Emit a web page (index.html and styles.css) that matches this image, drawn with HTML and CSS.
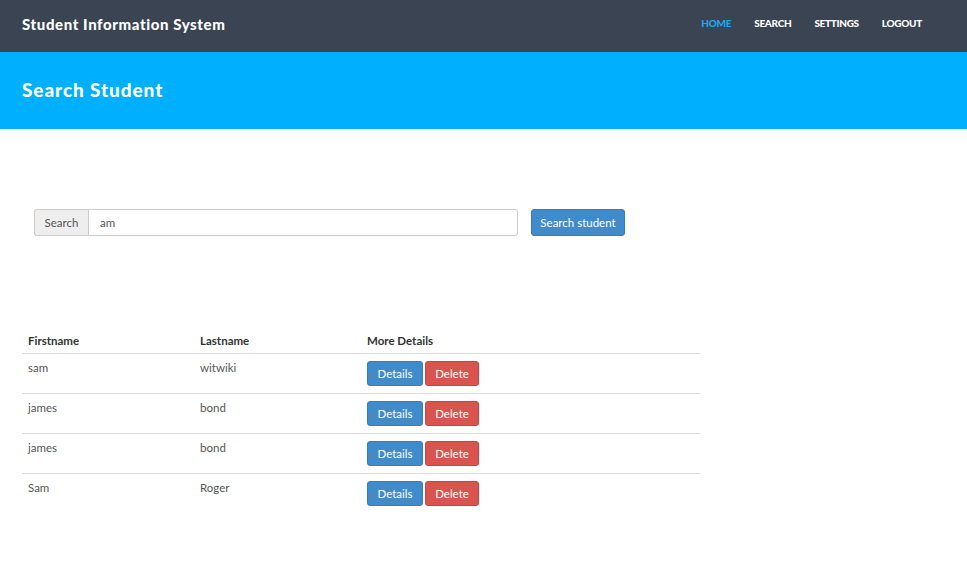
FILE: index.html
```html
<!DOCTYPE html>
<html>
<head>
<meta charset="utf-8">
<title>Student Information System</title>
<link rel="stylesheet" href="styles.css">
</head>
<body>
<header class="navbar">
  <div class="brand">Student Information System</div>
  <nav class="nav">
    <a class="nav-link active" href="#">HOME</a>
    <a class="nav-link" href="#">SEARCH</a>
    <a class="nav-link" href="#">SETTINGS</a>
    <a class="nav-link" href="#">LOGOUT</a>
  </nav>
</header>
<section class="banner">
  <h1 class="banner-title">Search Student</h1>
</section>
<main class="content">
  <form class="search-form">
    <div class="input-group">
      <span class="addon">Search</span>
      <input class="search-input" type="text" value="am">
    </div>
    <button class="btn btn-primary search-btn" type="button">Search student</button>
  </form>
  <table class="students">
    <thead>
      <tr><th class="c1">Firstname</th><th class="c2">Lastname</th><th class="c3">More Details</th></tr>
    </thead>
    <tbody>
      <tr><td>sam</td><td>witwiki</td><td><button class="btn btn-primary">Details</button><button class="btn btn-danger">Delete</button></td></tr>
      <tr><td>james</td><td>bond</td><td><button class="btn btn-primary">Details</button><button class="btn btn-danger">Delete</button></td></tr>
      <tr><td>james</td><td>bond</td><td><button class="btn btn-primary">Details</button><button class="btn btn-danger">Delete</button></td></tr>
      <tr><td>Sam</td><td>Roger</td><td><button class="btn btn-primary">Details</button><button class="btn btn-danger">Delete</button></td></tr>
    </tbody>
  </table>
</main>
</body>
</html>
```
FILE: styles.css
```css
* { box-sizing: border-box; }
html, body { margin: 0; padding: 0; background: #fff; }
body { font-family: "Lato", "Open Sans", sans-serif; color: #333; }

.navbar {
  height: 52px;
  background: #3a4452;
  display: flex;
  align-items: center;
  justify-content: space-between;
  padding: 0 45px 0 22px;
}
.brand {
  color: #fff;
  font-family: "Lato", sans-serif;
  font-weight: 900;
  font-size: 15px;
  letter-spacing: 0.6px;
  margin-top: -5px;
}
.nav { display: flex; gap: 23px; margin-top: -6px; }
.nav-link {
  color: #fff;
  text-decoration: none;
  font-weight: 900;
  font-size: 10px;
  letter-spacing: -0.3px;
}
.nav-link.active { color: #1ea7f5; }

.banner {
  height: 77px;
  background: #00b0fe;
  display: flex;
  align-items: center;
  padding: 0 22px;
}
.banner-title {
  margin: 0;
  color: #fff;
  font-family: "Lato", sans-serif;
  font-weight: 900;
  font-size: 19px;
  letter-spacing: 0.9px;
  margin-top: -2px;
}

.content { padding: 80px 22px 0 22px; }

.search-form {
  display: flex;
  align-items: center;
  gap: 13px;
  padding-left: 12px;
}
.input-group {
  display: flex;
  width: 484px;
  height: 27px;
}
.addon {
  width: 54px;
  display: flex;
  align-items: center;
  justify-content: center;
  background: #eee;
  border: 1px solid #ccc;
  border-right: 0;
  border-radius: 3px 0 0 3px;
  color: #555;
  font-size: 11.5px;
}
.search-input {
  flex: 1;
  border: 1px solid #ccc;
  border-radius: 0 3px 3px 0;
  padding: 0 11px;
  font-family: inherit;
  font-size: 11.5px;
  color: #555;
  outline: none;
}

.btn {
  border: 1px solid transparent;
  border-radius: 3px;
  color: #fff;
  font-family: "Lato", sans-serif;
  font-size: 11.5px;
  height: 25px;
  padding: 0 10px;
  cursor: pointer;
}
.btn-primary { background: #428bca; border-color: #357ebd; }
.btn-danger { background: #d9534f; border-color: #d43f3a; }
.search-btn { height: 27px; width: 94px; padding: 0; }

.students {
  margin-top: 92px;
  width: 678px;
  border-collapse: collapse;
  font-size: 11.5px;
}
.students th {
  text-align: left;
  font-weight: 700;
  color: #333;
  padding: 6px 6px 6px 6px;
  border-bottom: 1px solid #ddd;
  height: 23px;
  vertical-align: bottom;
}
.students .c1 { width: 172px; }
.students .c2 { width: 167px; }
.students td {
  padding: 7px 6px 7px 6px;
  vertical-align: top;
  height: 40px;
  color: #555;
  border-top: 1px solid #ddd;
}
.students tbody tr:first-child td { border-top: 0; }
.students td .btn + .btn { margin-left: 2px; }
.students td .btn-primary { width: 56px; padding: 0; }
.students td .btn-danger { width: 54px; padding: 0; }
```
